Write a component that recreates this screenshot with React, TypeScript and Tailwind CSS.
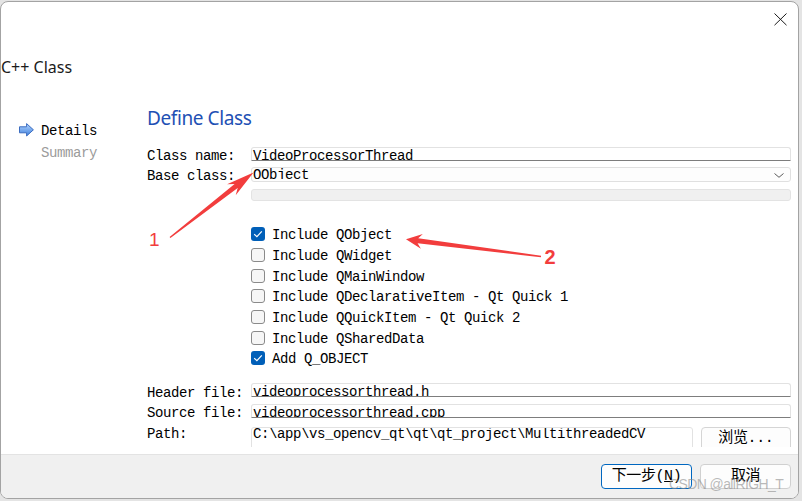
import React from "react";

const mono =
  "font-['Liberation_Mono','Noto_Sans_CJK_SC',monospace] text-[14px] tracking-[-0.4px] leading-[14px]";

function LineEdit({ value }: { value: string }) {
  return (
    <div className="h-[14px] overflow-hidden rounded-t-[3px] border border-[#e2e2e2] border-b-[#7d7d7d] bg-white pl-[1px]">
      <div className={`${mono} whitespace-nowrap pt-[1px]`}>{value}</div>
    </div>
  );
}

function CheckRow({ label, checked }: { label: string; checked?: boolean }) {
  return (
    <div className="flex h-[20.67px] items-start">
      {checked ? (
        <div className="mt-[1px] flex h-[14px] w-[14px] shrink-0 items-center justify-center rounded-[3px] bg-[#005fb8]">
          <svg width="10" height="8" viewBox="0 0 10 8">
            <path d="M1.2 4.2 L3.9 6.6 L8.8 1.4" fill="none" stroke="#ffffff" strokeWidth="1.2" />
          </svg>
        </div>
      ) : (
        <div className="mt-[1px] h-[14px] w-[14px] shrink-0 rounded-[3px] border border-[#8a8a8a] bg-[#f6f6f6]" />
      )}
      <div className={`${mono} ml-[7px] whitespace-nowrap pt-[2px]`}>{label}</div>
    </div>
  );
}

const checks = [
  { label: "Include QObject", checked: true },
  { label: "Include QWidget" },
  { label: "Include QMainWindow" },
  { label: "Include QDeclarativeItem - Qt Quick 1" },
  { label: "Include QQuickItem - Qt Quick 2" },
  { label: "Include QSharedData" },
  { label: "Add Q_OBJECT", checked: true },
];

export default function App() {
  return (
    <div className="relative h-[501px] w-[802px] overflow-hidden bg-[#e4e4e4] pt-[1px]">
      <div className="flex h-[498px] w-[799px] flex-col overflow-hidden rounded-[8px] border border-[#a3a3a3] bg-white text-black">
        {/* title bar */}
        <div className="flex h-[55.2px] shrink-0 justify-end pr-[11px] pt-[11.3px]">
          <svg width="13" height="13" viewBox="0 0 13 13">
            <path d="M0.5 0.5 L12.5 12.2 M12.5 0.5 L0.5 12.2" stroke="#1a1a1a" strokeWidth="1" fill="none" />
          </svg>
        </div>
        <div className="h-[20px] shrink-0 font-['Noto_Sans',sans-serif] text-[16px] leading-[20px] text-[#1b1b1b]">
          C++ Class
        </div>

        {/* main */}
        <div className="flex min-h-0 flex-1 overflow-hidden">
          <div className="w-[146px] shrink-0 pl-[18px] pt-[47px]">
            <div className="flex h-[14px] items-start">
              <svg className="-mt-[1.6px]" width="15" height="14" viewBox="0 0 15 14">
                <defs>
                  <linearGradient id="arr" x1="0" y1="0" x2="0" y2="1">
                    <stop offset="0" stopColor="#b5d6ff" />
                    <stop offset="1" stopColor="#3d7fdc" />
                  </linearGradient>
                </defs>
                <path
                  d="M0.5 3.8 H7.6 V0.6 L14.4 6.8 L7.6 13 V9.8 H0.5 Z"
                  fill="url(#arr)"
                  stroke="#3b6cc0"
                  strokeWidth="1"
                  strokeLinejoin="round"
                />
              </svg>
              <span className={`${mono} ml-[7px]`}>Details</span>
            </div>
            <div className={`${mono} ml-[22px] mt-[7.5px] text-[#9b9b9b]`}>Summary</div>
          </div>

          <div className="flex-1 pr-[7px] pt-[28.7px]">
            <div className="h-[40.8px] font-['Noto_Sans',sans-serif] text-[19px] leading-[24px] tracking-[-0.4px] text-[#1e50b4]">
              Define Class
            </div>

            <div className="flex h-[20px]">
              <div className={`${mono} w-[104px] shrink-0 pt-[2px]`}>Class name:</div>
              <div className="flex-1">
                <LineEdit value="VideoProcessorThread" />
              </div>
            </div>

            <div className="flex h-[22.6px]">
              <div className={`${mono} w-[104px] shrink-0 pt-[2.6px]`}>Base class:</div>
              <div className="relative h-[15px] flex-1 rounded-[3px] border border-[#e0e0e0] bg-[#fdfdfd]">
                <div className="h-[11.3px] overflow-hidden pl-[1px]">
                  <div className={mono}>QObject</div>
                </div>
                <svg className="absolute right-[6px] top-[5px]" width="10" height="5" viewBox="0 0 10 5">
                  <path d="M0.5 0.5 L5 4.3 L9.5 0.5" fill="none" stroke="#5a5a5a" strokeWidth="1" />
                </svg>
              </div>
            </div>

            <div className="h-[37px] pl-[104px]">
              <div className="h-[11.7px] rounded-[3px] border border-[#e3e3e3] bg-[#f0f0f0]" />
            </div>

            <div className="pl-[104px]">
              {checks.map((c) => (
                <CheckRow key={c.label} label={c.label} checked={c.checked} />
              ))}
            </div>

            <div className="h-[12.3px]" />

            <div className="flex h-[21px]">
              <div className={`${mono} w-[104px] shrink-0 pt-[2.7px]`}>Header file:</div>
              <div className="flex-1">
                <LineEdit value="videoprocessorthread.h" />
              </div>
            </div>

            <div className="flex h-[23px]">
              <div className={`${mono} w-[104px] shrink-0 pt-[2.3px]`}>Source file:</div>
              <div className="flex-1">
                <LineEdit value="videoprocessorthread.cpp" />
              </div>
            </div>

            <div className="flex h-[24px]">
              <div className={`${mono} w-[104px] shrink-0`}>Path:</div>
              <div className="h-[24px] w-[441.7px] shrink-0 overflow-hidden rounded-[3px] border border-[#e2e2e2] bg-white pl-[1px]">
                <div className={`${mono} -mt-[0.7px] whitespace-nowrap`}>
                  C:\app\vs_opencv_qt\qt\qt_project\MultithreadedCV
                </div>
              </div>
              <div
                className={`${mono} ml-[8px] flex h-[24px] flex-1 items-center justify-center rounded-[4px] border border-[#d5d5d5] bg-[#fdfdfd] text-[15px]`}
              >
                浏览...
              </div>
            </div>
          </div>
        </div>

        <div className="h-[7px] shrink-0" />

        {/* footer */}
        <div className="flex h-[44px] shrink-0 justify-end gap-[8px] border-t border-[#e3e3e3] bg-[#f0f0f0] pr-[7px] pt-[9px]">
          <div
            className={`${mono} flex h-[25px] w-[91px] items-center justify-center rounded-[4px] border border-[#0067c0] bg-[#fdfdfd] text-[15px]`}
          >
            下一步(<span className="underline">N</span>)
          </div>
          <div
            className={`${mono} flex h-[25px] w-[91px] items-center justify-center rounded-[4px] border border-[#d0d0d0] bg-[#fdfdfd] text-[15px]`}
          >
            取消
          </div>
        </div>
      </div>

      {/* annotations */}
      <svg className="pointer-events-none absolute left-0 top-0" width="802" height="501" viewBox="0 0 802 501">
        <polygon
          points="170.43,238.05 237.68,187.99 235.7,195.2 253.5,172.5 227.1,184.2 234.6,184.05 169.57,236.95"
          fill="#f23d3d"
        />
        <polygon
          points="541.1,255.7 418.22,238.34 422.82,233.88 406,239.3 420.92,248.76 417.58,243.3 540.9,257.3"
          fill="#f23d3d"
        />
        <text x="149" y="245.5" fontFamily="Liberation Sans, Arial, sans-serif" fontSize="19" fill="#f23d3d">
          1
        </text>
        <text x="544.5" y="264" fontFamily="Liberation Sans, Arial, sans-serif" fontSize="20" fontWeight="bold" fill="#f23d3d">
          2
        </text>
      </svg>

      <div className="pointer-events-none absolute left-[669px] top-[476px] font-['Liberation_Sans',Arial,sans-serif] text-[14px] leading-[16px] tracking-[-0.6px] text-[#8c8c8c]/60">
        CSDN @allRIGH_T
      </div>
    </div>
  );
}
